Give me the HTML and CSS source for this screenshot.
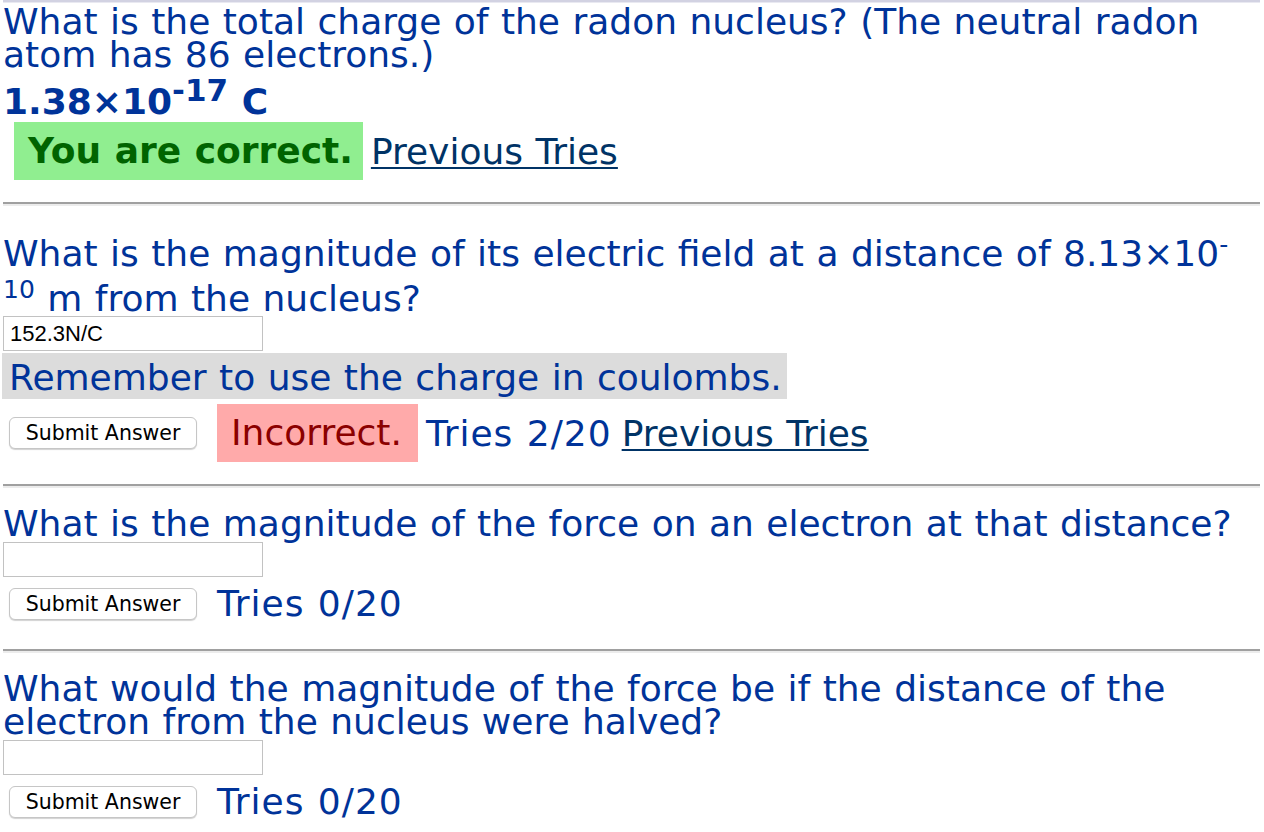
FILE: index.html
```
<!DOCTYPE html>
<html lang="en">
<head>
<meta charset="utf-8">
<title>Radon nucleus problem</title>
<link rel="stylesheet" href="styles.css">
</head>
<body>
<main class="page">
  <div class="topbar"></div>

  <section class="part part-first">
    <p class="q">What is the total charge of the radon nucleus? (The neutral radon atom has 86 electrons.)</p>
    <div class="answer">1.38×10<sup>-17</sup> C</div>
    <div class="status">
      <span class="badge badge-ok">You are correct.</span>
      <a class="prev" href="#">Previous Tries</a>
    </div>
  </section>
  <hr class="rule">

  <section class="part">
    <p class="q">What is the magnitude of its electric field at a distance of 8.13×10<sup>-<br>10</sup> m from the nucleus?</p>
    <input class="ans" type="text" value="152.3N/C">
    <div class="hint">Remember to use the charge in coulombs.</div>
    <div class="status">
      <button class="submit" type="button">Submit Answer</button>
      <span class="badge badge-bad">Incorrect.</span>
      <span class="tries">Tries 2/20</span>
      <a class="prev" href="#">Previous Tries</a>
    </div>
  </section>
  <hr class="rule">

  <section class="part part-plain">
    <p class="q">What is the magnitude of the force on an electron at that distance?</p>
    <input class="ans" type="text" value="">
    <div class="status">
      <button class="submit" type="button">Submit Answer</button>
      <span class="tries">Tries 0/20</span>
    </div>
  </section>
  <hr class="rule">

  <section class="part part-plain">
    <p class="q">What would the magnitude of the force be if the distance of the electron from the nucleus were halved?</p>
    <input class="ans" type="text" value="">
    <div class="status">
      <button class="submit" type="button">Submit Answer</button>
      <span class="tries">Tries 0/20</span>
    </div>
  </section>
</main>
</body>
</html>
```

FILE: styles.css
```
html, body {
  margin: 0;
  padding: 0;
  background: #ffffff;
}

body {
  font-family: "DejaVu Sans", Verdana, sans-serif;
  font-size: 36px;
  line-height: 33px;
  color: #003399;
  word-spacing: 1px;
  overflow: hidden;
}

.page {
  padding: 0 4px 0 3px;
}

.topbar {
  height: 2px;
  background: #d2d2e2;
  border-bottom: 1px solid #e9e9f1;
}

.part {
  display: flex;
  flex-direction: column;
  align-items: flex-start;
}

.q {
  margin: 19px 0 0;
}

.part-first .q {
  margin-top: 2px;
}

.q sup {
  font-size: 25px;
  line-height: 39px;
  vertical-align: super;
}

.answer {
  margin-top: 3px;
  font-weight: bold;
}

.answer sup {
  font-size: 31px;
  vertical-align: super;
}

.ans {
  box-sizing: border-box;
  width: 260px;
  height: 35px;
  margin: 1px 0 0;
  padding: 0 6px;
  border: 1px solid #c2c2c2;
  border-radius: 0;
  background: #ffffff;
  font-family: "Liberation Sans", Arial, sans-serif;
  font-size: 22px;
  color: #000000;
  outline: none;
}

.part-plain .ans {
  margin-top: 2px;
}

.hint {
  margin: 2px 0 0 -1px;
  padding: 8px 5px 5px 7px;
  background: #dcdcdc;
}

.status {
  display: flex;
  align-items: center;
  gap: 8px;
  min-height: 33px;
  margin-top: 10px;
}

.answer + .status {
  margin-top: 4px;
  margin-left: 11px;
}

.hint + .status {
  margin-top: 5px;
}

.part-plain .status {
  margin-bottom: 7px;
}

.badge {
  display: block;
  padding: 12px 13px 13px 14px;
}

.badge-ok {
  background: #90ee90;
  color: #006400;
  font-weight: bold;
  padding-right: 10px;
}

.badge-bad {
  background: #ffaaaa;
  color: #8b0000;
  padding-right: 16px;
}

.tries {
  letter-spacing: 1px;
}

.status .tries + .prev {
  margin-left: 2px;
}

.prev {
  color: #003366;
  text-decoration: underline;
  text-decoration-thickness: 2px;
  text-underline-offset: 3px;
}

.submit {
  box-sizing: border-box;
  width: 188px;
  height: 32px;
  margin: 0 12px 0 6px;
  padding: 0;
  border: 1px solid #c6c6c6;
  border-radius: 6px;
  background: #ffffff;
  box-shadow: 0 1px 1px rgba(0, 0, 0, 0.18);
  font-family: "DejaVu Sans", Verdana, sans-serif;
  font-size: 20.5px;
  word-spacing: 0;
  color: #000000;
}

.rule {
  height: 0;
  margin: 22px 0 0;
  border: 0;
  border-top: 2px solid #a0a0a0;
  border-bottom: 2px solid #ececec;
}
```
